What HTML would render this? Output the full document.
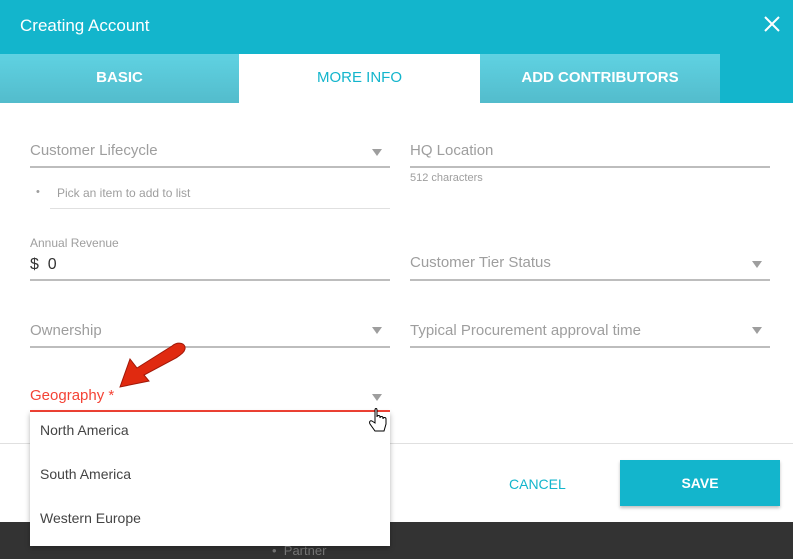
<!DOCTYPE html>
<html><head><meta charset="utf-8"><style>
*{box-sizing:border-box;margin:0;padding:0}
body{width:793px;height:559px;overflow:hidden;background:#fff;font-family:"Liberation Sans",sans-serif;position:relative}
.hdr{position:absolute;left:0;top:0;width:793px;height:103px;background:#13b5cc}
.title{position:absolute;left:20px;top:16px;color:#fff;font-size:17px}
.tab{position:absolute;top:54px;height:49px;line-height:47px;text-align:center;font-size:15px;font-weight:bold;color:#fff;background:linear-gradient(#5fd2e2,#53bccc)}
.t2{background:#fff;color:#13b5cc;font-weight:normal}
.f{position:absolute;color:#9e9e9e;font-size:15px}
.line{position:absolute;height:2px;background:#bdbdbd}
.tri{position:absolute;width:0;height:0;border-left:5px solid transparent;border-right:5px solid transparent;border-top:7px solid #9e9e9e}
.small{position:absolute;font-size:11px;color:#9e9e9e}
.footline{position:absolute;left:0;top:443px;width:793px;height:1px;background:#e0e0e0}
.dark{position:absolute;left:0;top:522px;width:793px;height:37px;background:#333}
.menu{position:absolute;left:30px;top:412px;width:360px;height:134px;background:#fff;box-shadow:0 2px 5px rgba(0,0,0,.3)}
.menu div{position:absolute;left:10px;font-size:14px;color:#444}
</style></head><body>
<div class="hdr"></div>
<div class="title">Creating Account</div>
<svg style="position:absolute;left:764px;top:16px" width="16" height="16" viewBox="0 0 16 16"><path d="M1 1L15 15M15 1L1 15" stroke="#fff" stroke-width="2"/></svg>
<div class="tab" style="left:0;width:239px">BASIC</div>
<div class="tab t2" style="left:239px;width:241px">MORE INFO</div>
<div class="tab" style="left:480px;width:240px">ADD CONTRIBUTORS</div>

<div class="f" style="left:30px;top:142px">Customer Lifecycle</div>
<div class="tri" style="left:372px;top:149px"></div>
<div class="line" style="left:30px;top:166px;width:360px"></div>
<div class="small" style="left:36px;top:186px">•</div>
<div class="small" style="left:57px;top:186px;font-size:12px">Pick an item to add to list</div>
<div class="line" style="left:50px;top:208px;width:340px;height:1px;background:#e0e0e0"></div>

<div class="f" style="left:410px;top:142px">HQ Location</div>
<div class="line" style="left:410px;top:166px;width:360px"></div>
<div class="small" style="left:410px;top:172px">512 characters</div>

<div class="small" style="left:30px;top:236px;font-size:12px">Annual Revenue</div>
<div class="f" style="left:30px;top:256px;color:#333;font-size:16px">$&nbsp; 0</div>
<div class="line" style="left:30px;top:279px;width:360px"></div>

<div class="f" style="left:410px;top:254px">Customer Tier Status</div>
<div class="tri" style="left:752px;top:261px"></div>
<div class="line" style="left:410px;top:279px;width:360px"></div>

<div class="f" style="left:30px;top:322px">Ownership</div>
<div class="tri" style="left:372px;top:327px"></div>
<div class="line" style="left:30px;top:346px;width:360px"></div>

<div class="f" style="left:410px;top:322px">Typical Procurement approval time</div>
<div class="tri" style="left:752px;top:327px"></div>
<div class="line" style="left:410px;top:346px;width:360px"></div>

<div class="f" style="left:30px;top:387px;color:#f44336">Geography *</div>
<div class="tri" style="left:372px;top:394px"></div>
<div class="line" style="left:30px;top:410px;width:360px;background:#f44336"></div>

<div class="footline"></div>
<div style="position:absolute;left:509px;top:476px;color:#13b5cc;font-size:14px">CANCEL</div>
<div style="position:absolute;left:620px;top:460px;width:160px;height:46px;background:#13b5cc;color:#fff;font-size:14px;font-weight:bold;text-align:center;line-height:46px;box-shadow:0 2px 3px rgba(0,0,0,.25)">SAVE</div>

<div class="dark"></div>
<div style="position:absolute;left:272px;top:543px;color:#777;font-size:13px">•&nbsp; Partner</div>

<div class="menu">
<div style="top:10px">North America</div>
<div style="top:54px">South America</div>
<div style="top:98px">Western Europe</div>
</div>

<svg style="position:absolute;left:100px;top:338px" width="90" height="55" viewBox="0 0 90 55">
<path d="M20 49 L30 21 L37 30 L72 8 C78 3 86 5 85 11 C84 15 80 17 76 20 L44 37 L49 43 Z" fill="#e02a10" stroke="#a01808" stroke-width="1"/>
</svg>
<svg style="position:absolute;left:369px;top:408px" width="22" height="28" viewBox="0 0 22 28">
<path d="M6 2 L6 15 L3 13 C1 12 0 14 1 16 L6 23 L15 23 L17 16 L17 11 C17 9 14 9 14 11 L14 10 C14 8 11 8 11 10 L11 9 C11 7 8 7 8 9 L8 2 C8 0 6 0 6 2Z" fill="#fff" stroke="#000" stroke-width="1"/>
</svg>
</body></html>
